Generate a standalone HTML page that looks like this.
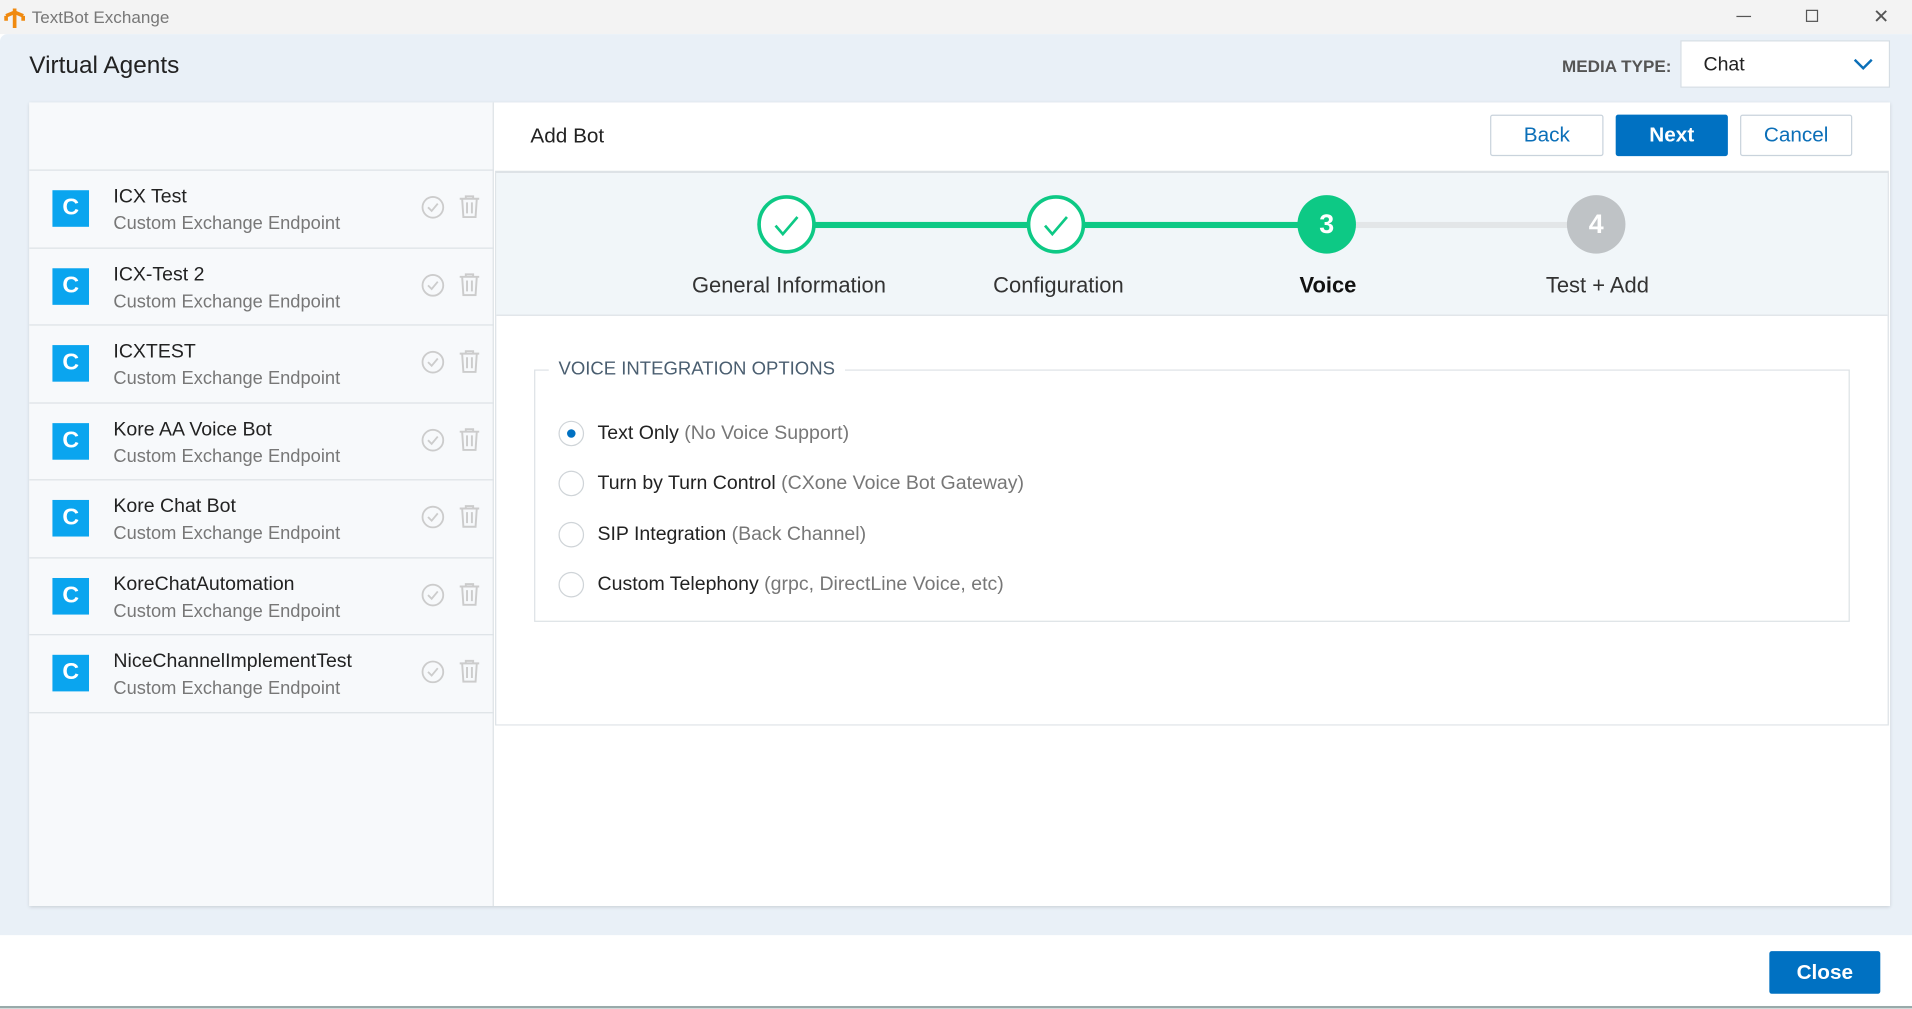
<!DOCTYPE html>
<html><head><meta charset="utf-8"><style>
*{box-sizing:border-box;margin:0;padding:0}
html,body{width:1912px;height:1009px;overflow:hidden;background:#fff}
#w{position:absolute;left:0;top:0;width:1568px;height:827px;transform:scale(1.21939);transform-origin:0 0;font-family:"Liberation Sans",sans-serif;color:#222}
.a{position:absolute}
.btn{position:absolute;height:34px;border:1px solid #c9d3dc;background:#fff;color:#0b6fb8;font-size:17px;display:flex;align-items:center;justify-content:center;border-radius:2px}
.row{position:absolute;left:0;width:381px;height:63.5px;border-bottom:1px solid #dde2e6}
.ic{position:absolute;left:19px;top:16px;width:30px;height:30px;background:#0aa5ef;color:#fff;font-weight:bold;font-size:19px;display:flex;align-items:center;justify-content:center}
.nm{position:absolute;left:69px;top:13px;font-size:16px;color:#222}
.sb{position:absolute;left:69px;top:35px;font-size:15px;color:#777}
.ck{position:absolute;left:321px;top:20px}
.tr{position:absolute;left:351px;top:19px}
.circ{position:absolute;width:48px;height:48px;border-radius:50%;top:160px}
.lbl{position:absolute;top:224px;font-size:18px;color:#333;width:220px;text-align:center}
.rad{position:absolute;left:458px;width:21px;height:21px;border:1px solid #cfd4d8;border-radius:50%;background:#fff}
.rt{position:absolute;left:490px;font-size:16px;color:#222}
.rt span{color:#777}
</style></head><body><div id="w">
<div class="a" style="left:0;top:0;width:1568px;height:28px;background:#f3f3f3"></div>
<svg class="a" style="left:2px;top:5px" width="20" height="20" viewBox="0 0 20 20"><path d="M10 2v16M3 8l7-3 7 3M3 8v4M17 8v4" stroke="#f08a10" stroke-width="3" fill="none"/></svg>
<div class="a" style="left:26px;top:6px;font-size:14px;color:#777">TextBot Exchange</div>
<div class="a" style="left:1424px;top:13px;width:12px;height:1px;background:#555"></div>
<div class="a" style="left:1481px;top:8px;width:10px;height:10px;border:1px solid #555"></div>
<div class="a" style="left:1536px;top:4px;font-size:16px;color:#555">✕</div>
<div class="a" style="left:0;top:28px;width:1568px;height:739px;background:#e9f0f7;border-top-left-radius:6px"></div>
<div class="a" style="left:24px;top:43px;font-size:20px;color:#222">Virtual Agents</div>
<div class="a" style="left:1281px;top:46px;font-size:14px;color:#555;font-weight:bold">MEDIA TYPE:</div>
<div class="a" style="left:1378px;top:33px;width:172px;height:39px;background:#fff;border:1px solid #d5dde4"></div>
<div class="a" style="left:1397px;top:45px;font-size:16px;color:#222">Chat</div>
<svg class="a" style="left:1520px;top:48px" width="16" height="10"><path d="M1 1l7 7 7-7" stroke="#0b6fb8" stroke-width="2" fill="none"/></svg>
<div class="a" style="left:24px;top:84px;width:1526px;height:659px;background:#fff;box-shadow:0 1px 3px rgba(0,0,0,.15)"></div>
<div class="a" style="left:24px;top:84px;width:381px;height:659px;background:#f7f9fb;border-right:1px solid #dde2e6">
<div class="a" style="left:0;top:0;width:381px;height:56px;border-bottom:1px solid #dde2e6"></div>
<div id="rows"></div>
</div>
<div class="a" style="left:435px;top:102px;font-size:17px;color:#222">Add Bot</div>
<div class="btn" style="left:1222px;top:94px;width:93px">Back</div>
<div class="btn" style="left:1325px;top:94px;width:92px;background:#0071c2;border-color:#0071c2;color:#fff;font-weight:bold">Next</div>
<div class="btn" style="left:1427px;top:94px;width:92px">Cancel</div>
<div class="a" style="left:406px;top:140px;width:1143px;height:455px;border:1px solid #dde2e6;border-top:2px solid #dde2e6"></div>
<div class="a" style="left:407px;top:142px;width:1141px;height:117px;background:#f1f6f9;border-bottom:1px solid #dde2e6"></div>
<div class="a" style="left:645px;top:182px;width:443px;height:5px;background:#0dc985"></div>
<div class="a" style="left:1088px;top:182px;width:221px;height:5px;background:#e3e6e8"></div>
<div class="circ" style="left:621px;border:3px solid #0dc985;background:#fff"><svg width="42" height="42" style="position:absolute;left:0;top:0"><path d="M12 22l6 7 12-14" stroke="#0dc985" stroke-width="2.2" fill="none"/></svg></div>
<div class="circ" style="left:842px;border:3px solid #0dc985;background:#fff"><svg width="42" height="42" style="position:absolute;left:0;top:0"><path d="M12 22l6 7 12-14" stroke="#0dc985" stroke-width="2.2" fill="none"/></svg></div>
<div class="circ" style="left:1064px;background:#0dc985;color:#fff;font-size:22px;font-weight:bold;display:flex;align-items:center;justify-content:center">3</div>
<div class="circ" style="left:1285px;background:#bfc3c6;color:#fff;font-size:22px;font-weight:bold;display:flex;align-items:center;justify-content:center">4</div>
<div class="lbl" style="left:537px">General Information</div>
<div class="lbl" style="left:758px">Configuration</div>
<div class="lbl" style="left:979px;font-weight:bold;color:#111">Voice</div>
<div class="lbl" style="left:1200px">Test + Add</div>
<div class="a" style="left:438px;top:303px;width:1079px;height:207px;border:1px solid #dde2e6"></div>
<div class="a" style="left:450px;top:294px;padding:0 8px;background:#fff;font-size:15.2px;color:#4a5e70">VOICE INTEGRATION OPTIONS</div>
<div class="rad" style="top:345px"><div style="position:absolute;left:6px;top:6px;width:7px;height:7px;border-radius:50%;background:#0071c2"></div></div>
<div class="rad" style="top:386px"></div>
<div class="rad" style="top:428px"></div>
<div class="rad" style="top:469px"></div>
<div class="rt" style="top:347px">Text Only <span>(No Voice Support)</span></div>
<div class="rt" style="top:388px">Turn by Turn Control <span>(CXone Voice Bot Gateway)</span></div>
<div class="rt" style="top:430px">SIP Integration <span>(Back Channel)</span></div>
<div class="rt" style="top:471px">Custom Telephony <span>(grpc, DirectLine Voice, etc)</span></div>
<div class="a" style="left:0;top:767px;width:1568px;height:60px;background:#fff"></div>
<div class="a" style="left:0;top:825px;width:1568px;height:2px;background:#9aa"></div>
<div class="btn" style="left:1451px;top:780px;width:91px;height:35px;background:#0071c2;border-color:#0071c2;color:#fff;font-weight:bold">Close</div>
</div>
<script>
var n=["ICX Test","ICX-Test 2","ICXTEST","Kore AA Voice Bot","Kore Chat Bot","KoreChatAutomation","NiceChannelImplementTest"],h="";
n.forEach(function(t,i){h+='<div class="row" style="top:'+(56+i*63.5)+'px"><div class="ic">C</div><div class="nm">'+t+'</div><div class="sb">Custom Exchange Endpoint</div><svg class="ck" width="20" height="20"><circle cx="10" cy="10" r="8.5" stroke="#ccc" stroke-width="1.5" fill="none"/><path d="M6 10l3 3 5-6" stroke="#ccc" stroke-width="1.5" fill="none"/></svg><svg class="tr" width="20" height="20"><path d="M2 4h16M7 4V2h6v2M4 4l1 15h10l1-15M8 7v9M12 7v9" stroke="#ccc" stroke-width="1.6" fill="none"/></svg></div>';});
document.getElementById("rows").innerHTML=h;
</script>
</body></html>
